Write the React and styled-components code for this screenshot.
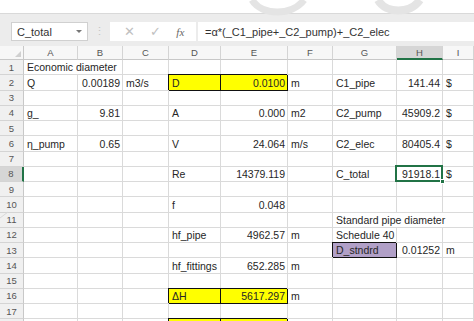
import React from 'react';
import styled, { createGlobalStyle, css } from 'styled-components';

const Global = createGlobalStyle`
  html, body { margin: 0; padding: 0; background: #fff; }
  body { font-family: "Liberation Sans", Arial, sans-serif; overflow: hidden; }
`;

const Page = styled.div`
  width: 474px;
  height: 321px;
  position: relative;
  overflow: hidden;
  background: #fff;
  display: flex;
  flex-direction: column;
`;

const TopSpace = styled.div`
  height: 13px;
  flex: none;
`;

const FormulaBar = styled.div`
  height: 33px;
  flex: none;
  box-sizing: border-box;
  background: #ececec;
  border-top: 1px solid #d9d9d9;
  display: flex;
  align-items: flex-start;
  padding: 8px 0 0 11px;
`;

const NameBox = styled.div`
  width: 77px;
  height: 19px;
  box-sizing: border-box;
  background: #fff;
  border: 1px solid #d0d0d0;
  display: flex;
  align-items: center;
  justify-content: space-between;
  padding: 0 5px 0 5px;
  font-size: 11px;
  color: #333;
`;

const Caret = styled.span`
  width: 0;
  height: 0;
  border-left: 3px solid transparent;
  border-right: 3px solid transparent;
  border-top: 3px solid #777;
`;

const Grip = styled.div`
  width: 22px;
  height: 19px;
  display: flex;
  align-items: center;
  justify-content: center;
  color: #c4c4c4;
  font-size: 11px;
`;

const Controls = styled.div`
  width: 86px;
  height: 19px;
  box-sizing: border-box;
  background: #fff;
  display: flex;
  align-items: center;
  justify-content: space-around;
  padding: 0 4px 0 6px;
`;

const Ctl = styled.span`
  font-size: ${p => p.$size || 11}px;
  color: ${p => p.$color || '#c0c0c0'};
  font-style: ${p => (p.$italic ? 'italic' : 'normal')};
  font-family: ${p => (p.$serif ? '"Liberation Serif", serif' : 'inherit')};
`;

const FormulaInput = styled.div`
  flex: 1;
  height: 19px;
  margin-left: 2px;
  background: #fff;
  display: flex;
  align-items: center;
  padding-left: 7px;
  font-size: 11px;
  color: #333;
  white-space: nowrap;
`;

const Sheet = styled.div`
  flex: 1;
  display: grid;
  grid-template-columns: 24px 54px 45px 46px 52px 67px 45px 64px 46px 1fr;
  grid-template-rows: 14px repeat(18, 15.25px);
  font-size: 10.5px;
  color: #262626;
`;

const ColHead = styled.div`
  box-sizing: border-box;
  background: ${p => (p.$active ? '#d6d6d6' : '#f7f7f7')};
  border-right: 1px solid #d4d4d4;
  border-bottom: ${p => (p.$active ? '2px solid #217346' : '1px solid #c8c8c8')};
  display: flex;
  align-items: center;
  justify-content: center;
  font-size: 9.5px;
  color: #555;
`;

const Corner = styled.div`
  box-sizing: border-box;
  background: #f7f7f7;
  border-right: 1px solid #c8c8c8;
  border-bottom: 1px solid #c8c8c8;
  position: relative;
  &::after {
    content: '';
    position: absolute;
    right: 2px;
    bottom: 2px;
    border-left: 6px solid transparent;
    border-bottom: 6px solid #d0d0d0;
  }
`;

const RowHead = styled.div`
  box-sizing: border-box;
  background: ${p => (p.$active ? '#d6d6d6' : '#f0f0f0')};
  border-right: ${p => (p.$active ? '2px solid #217346' : '1px solid #c8c8c8')};
  border-bottom: 1px solid #d4d4d4;
  display: flex;
  align-items: center;
  justify-content: center;
  font-size: 9.5px;
  color: #555;
`;

const Cell = styled.div`
  box-sizing: border-box;
  position: relative;
  grid-column: span ${p => p.$span || 1};
  background: ${p => p.$fill || 'transparent'};
  border-right: 1px solid ${p => (p.$box ? '#111' : '#dadada')};
  border-bottom: 1px solid ${p => (p.$box ? '#111' : '#dadada')};
  display: flex;
  align-items: flex-end;
  justify-content: ${p => (p.$right ? 'flex-end' : 'flex-start')};
  padding: 0 2px 1px 3px;
  white-space: nowrap;
  overflow: visible;
  line-height: 12px;
  ${p => p.$box && css`
    box-shadow: -1px -1px 0 0 #111;
  `}
  ${p => p.$selected && css`
    &::after {
      content: '';
      position: absolute;
      left: -2px;
      top: -2px;
      right: -1px;
      bottom: -1px;
      border: 2px solid #217346;
    }
    &::before {
      content: '';
      position: absolute;
      right: -3px;
      bottom: -3px;
      width: 5px;
      height: 5px;
      background: #217346;
      border: 1px solid #fff;
      z-index: 2;
      box-sizing: border-box;
    }
  `}
`;

const Watermark = styled.svg`
  position: absolute;
  left: 0;
  top: 0;
  pointer-events: none;
`;

const YELLOW = '#ffff00';
const PURPLE = '#b1a0c7';

const COLS = ['A', 'B', 'C', 'D', 'E', 'F', 'G', 'H', 'I'];

const DATA = {
  1: { A: { t: 'Economic diameter', span: 2 } },
  2: {
    A: { t: 'Q' }, B: { t: '0.00189', r: 1 }, C: { t: 'm3/s' },
    D: { t: 'D', fill: YELLOW, box: 1 }, E: { t: '0.0100', r: 1, fill: YELLOW, box: 1 },
    F: { t: 'm' }, G: { t: 'C1_pipe' }, H: { t: '141.44', r: 1 }, I: { t: '$' },
  },
  4: {
    A: { t: 'g_' }, B: { t: '9.81', r: 1 }, D: { t: 'A' }, E: { t: '0.000', r: 1 },
    F: { t: 'm2' }, G: { t: 'C2_pump' }, H: { t: '45909.2', r: 1 }, I: { t: '$' },
  },
  6: {
    A: { t: 'η_pump' }, B: { t: '0.65', r: 1 }, D: { t: 'V' }, E: { t: '24.064', r: 1 },
    F: { t: 'm/s' }, G: { t: 'C2_elec' }, H: { t: '80405.4', r: 1 }, I: { t: '$' },
  },
  8: {
    D: { t: 'Re' }, E: { t: '14379.119', r: 1 }, G: { t: 'C_total' },
    H: { t: '91918.1', r: 1, sel: 1 }, I: { t: '$' },
  },
  10: { D: { t: 'f' }, E: { t: '0.048', r: 1 } },
  11: { G: { t: 'Standard pipe diameter', span: 3 } },
  12: { D: { t: 'hf_pipe' }, E: { t: '4962.57', r: 1 }, F: { t: 'm' }, G: { t: 'Schedule 40' } },
  13: { G: { t: 'D_stndrd', fill: PURPLE, box: 1 }, H: { t: '0.01252', r: 1 }, I: { t: 'm' } },
  14: { D: { t: 'hf_fittings' }, E: { t: '652.285', r: 1 }, F: { t: 'm' } },
  16: {
    D: { t: 'ΔH', fill: YELLOW, box: 1 }, E: { t: '5617.297', r: 1, fill: YELLOW, box: 1 },
    F: { t: 'm' },
  },
  18: { D: { t: '', fill: YELLOW, box: 1 }, E: { t: '', fill: YELLOW, box: 1 } },
};

function Row({ n }) {
  const data = DATA[n] || {};
  const cells = [];
  let skip = 0;
  COLS.forEach((c) => {
    if (skip > 0) { skip -= 1; return; }
    const d = data[c];
    if (d && d.span) skip = d.span - 1;
    cells.push(
      <Cell
        key={c}
        $span={d && d.span}
        $right={d && d.r}
        $fill={d && d.fill}
        $box={d && d.box}
        $selected={d && d.sel}
      >
        {d ? d.t : ''}
      </Cell>
    );
  });
  return (
    <>
      <RowHead $active={n === 8}>{n}</RowHead>
      {cells}
    </>
  );
}

export default function App() {
  const rows = Array.from({ length: 18 }, (_, i) => i + 1);
  return (
    <Page>
      <Global />
      <TopSpace />
      <FormulaBar>
        <NameBox>
          <span>C_total</span>
          <Caret />
        </NameBox>
        <Grip>⋮</Grip>
        <Controls>
          <Ctl $size={13}>✕</Ctl>
          <Ctl $size={13}>✓</Ctl>
          <Ctl $italic $serif $color="#666" $size={11}>fx</Ctl>
        </Controls>
        <FormulaInput>=α*(_C1_pipe+_C2_pump)+_C2_elec</FormulaInput>
      </FormulaBar>
      <Sheet>
        <Corner />
        {COLS.map((c) => (
          <ColHead key={c} $active={c === 'H'}>{c}</ColHead>
        ))}
        {rows.map((n) => <Row key={n} n={n} />)}
      </Sheet>
      <Watermark width="474" height="321" viewBox="0 0 474 321">
        <path d="M252 0 C 262 16, 292 16, 304 0" fill="none" stroke="#e4e4e4" strokeWidth="7" />
        <path d="M378 0 C 386 14, 410 14, 420 0" fill="none" stroke="#e4e4e4" strokeWidth="8" />
        <path d="M0 218 L 8 212" stroke="#d8d8d8" strokeWidth="1" />
      </Watermark>
    </Page>
  );
}
